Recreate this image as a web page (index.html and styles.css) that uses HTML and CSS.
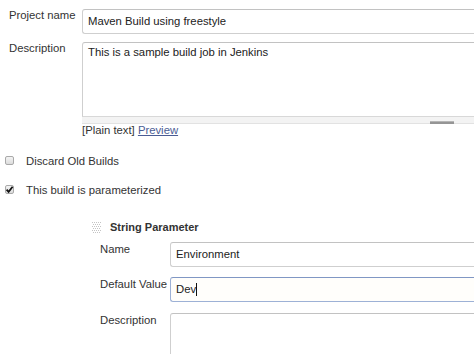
FILE: index.html
```html
<!DOCTYPE html>
<html>
<head>
<meta charset="utf-8">
<link rel="stylesheet" href="styles.css">
</head>
<body>
<div class="main">
  <div class="row">
    <div class="lbl">Project name</div>
    <div class="box text-box">Maven Build using freestyle</div>
  </div>
  <div class="row row-desc">
    <div class="lbl">Description</div>
    <div class="area-wrap">
      <div class="box area">This is a sample build job in Jenkins</div>
      <div class="handle-strip"><div class="grip"></div></div>
    </div>
  </div>
  <div class="markup">[Plain text] <a class="link" href="#">Preview</a></div>

  <div class="check-row first">
    <span class="cb"></span>
    <span>Discard Old Builds</span>
  </div>
  <div class="check-row second">
    <span class="cb checked"><svg width="9" height="9" viewBox="0 0 9 9"><path d="M1.6 4.6 L3.6 6.8 L7.6 1.8" fill="none" stroke="#111" stroke-width="1.8"/></svg></span>
    <span>This build is parameterized</span>
  </div>

  <div class="param">
    <div class="param-head">
      <svg class="drag" width="9" height="11" viewBox="0 0 9 11">
        <g fill="#c4c4c4">
          <rect x="0" y="0" width="1" height="1"/><rect x="2" y="0" width="1" height="1"/><rect x="4" y="0" width="1" height="1"/><rect x="6" y="0" width="1" height="1"/><rect x="8" y="0" width="1" height="1"/>
          <rect x="1" y="2" width="1" height="1"/><rect x="3" y="2" width="1" height="1"/><rect x="5" y="2" width="1" height="1"/><rect x="7" y="2" width="1" height="1"/>
          <rect x="0" y="4" width="1" height="1"/><rect x="2" y="4" width="1" height="1"/><rect x="4" y="4" width="1" height="1"/><rect x="6" y="4" width="1" height="1"/><rect x="8" y="4" width="1" height="1"/>
          <rect x="1" y="6" width="1" height="1"/><rect x="3" y="6" width="1" height="1"/><rect x="5" y="6" width="1" height="1"/><rect x="7" y="6" width="1" height="1"/>
          <rect x="0" y="8" width="1" height="1"/><rect x="2" y="8" width="1" height="1"/><rect x="4" y="8" width="1" height="1"/><rect x="6" y="8" width="1" height="1"/><rect x="8" y="8" width="1" height="1"/>
          <rect x="1" y="10" width="1" height="1"/><rect x="3" y="10" width="1" height="1"/><rect x="5" y="10" width="1" height="1"/><rect x="7" y="10" width="1" height="1"/>
        </g>
      </svg>
      <span class="param-title">String Parameter</span>
    </div>
    <div class="prow p-name">
      <div class="plbl">Name</div>
      <div class="box text-box">Environment</div>
    </div>
    <div class="prow p-default">
      <div class="plbl">Default Value</div>
      <div class="box text-box focused">Dev<span class="caret"></span></div>
    </div>
    <div class="prow p-desc">
      <div class="plbl">Description</div>
      <div class="box desc-box"></div>
    </div>
  </div>
</div>
</body>
</html>
```

FILE: styles.css
```css
html, body {
  margin: 0;
  padding: 0;
  background: #fff;
  overflow: hidden;
}
body {
  font-family: "Liberation Sans", Arial, sans-serif;
  font-size: 11.3px;
  line-height: 13px;
  color: #333;
  width: 474px;
  height: 354px;
}
.main {
  padding-top: 9px;
}
.row {
  display: flex;
  align-items: flex-start;
}
.lbl {
  flex: 0 0 82px;
  box-sizing: border-box;
  padding-left: 9px;
}
.box {
  box-sizing: border-box;
  border: 1px solid #cfcfcf;
  border-top-color: #c2c2c2;
  border-right: none;
  border-radius: 3px 0 0 3px;
  background: #fff;
  color: #222;
}
.text-box {
  flex: 1 1 auto;
  min-width: 0;
  height: 25px;
  padding-left: 5px;
  display: flex;
  align-items: center;
  white-space: nowrap;
}
.row-desc {
  margin-top: 8px;
}
.area-wrap {
  flex: 1 1 auto;
  min-width: 0;
}
.area {
  height: 75px;
  padding: 3px 5px;
  border-bottom-color: #d8d8d8;
  border-radius: 3px 0 0 0;
}
.handle-strip {
  height: 7px;
  background: #f3f3f3;
  border-bottom: 1px solid #e2e2e2;
  box-sizing: border-box;
  padding-top: 4px;
}
.grip {
  margin-left: 348px;
  width: 24px;
  height: 2px;
  background: #959595;
  border-top: 1px solid #b5b5b5;
}
.markup {
  padding-left: 82px;
}
.link {
  color: #4a5c94;
  text-decoration: underline;
}
.check-row {
  display: flex;
  align-items: flex-start;
  padding-left: 5px;
  gap: 12px;
}
.check-row.first {
  margin-top: 18px;
}
.check-row.second {
  margin-top: 16px;
}
.cb {
  flex: 0 0 auto;
  width: 9px;
  height: 9px;
  margin-top: 1px;
  box-sizing: border-box;
  border: 1px solid #a9a9a9;
  border-radius: 2px;
  background: linear-gradient(#f4f4f4, #dcdcdc);
  position: relative;
}
.cb svg {
  position: absolute;
  left: -1px;
  top: -1px;
}
.param {
  margin-top: 24px;
  padding-left: 92px;
}
.param-head {
  display: flex;
  align-items: flex-start;
  gap: 9px;
}
.drag {
  display: block;
  margin-top: 1px;
}
.param-title {
  font-weight: bold;
  font-size: 11px;
}
.prow {
  display: flex;
  align-items: flex-start;
  padding-left: 8px;
}
.plbl {
  flex: 0 0 70px;
  padding-top: 1px;
}
.p-name {
  margin-top: 8px;
}
.p-default {
  margin-top: 10px;
}
.p-desc {
  margin-top: 11px;
}
.focused {
  border-color: #9db1d6;
  border-top-color: #8097c4;
  border-right: none;
  background: #fffefb;
}
.caret {
  display: inline-block;
  width: 1px;
  height: 13px;
  background: #111;
}
.desc-box {
  flex: 1 1 auto;
  min-width: 0;
  height: 41px;
  border-bottom: none;
  border-radius: 3px 0 0 0;
}
```
